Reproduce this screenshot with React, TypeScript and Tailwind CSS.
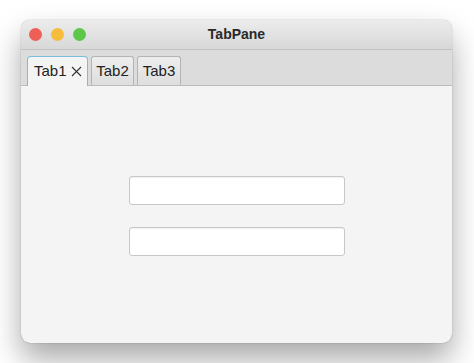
const App = () => {
  return (
    <div className="w-[474px] h-[363px] bg-white pt-[20px] pl-[21px] font-['Liberation_Sans',sans-serif]">
      <div className="w-[431px] h-[323px] rounded-[9px] overflow-hidden bg-[#f4f4f4] flex flex-col shadow-[0_16px_30px_rgba(0,0,0,0.34),0_0_1px_rgba(0,0,0,0.5)]">
        {/* title bar */}
        <div className="relative h-[30px] shrink-0 flex items-center bg-gradient-to-b from-[#ececec] to-[#d8d8d8] border-b border-[#c2c2c2]">
          <div className="flex gap-[9px] pl-[8px]">
            <div className="w-[13px] h-[13px] rounded-full bg-[#ee5f58]"></div>
            <div className="w-[13px] h-[13px] rounded-full bg-[#f6bd3d]"></div>
            <div className="w-[13px] h-[13px] rounded-full bg-[#5fc64c]"></div>
          </div>
          <div className="absolute inset-0 flex items-center justify-center text-[14px] font-bold text-[#2a2a2a]">
            TabPane
          </div>
        </div>

        {/* tab header */}
        <div className="h-[36px] shrink-0 bg-[#dcdcdc] border-b border-[#bcbcbc] flex items-end pl-[6px] gap-[3px]">
          <div className="w-[61px] h-[30px] -mb-px flex items-center pl-[6px] gap-[4px] bg-[#f4f4f4] border border-b-0 border-[#79bfdc] rounded-t-[4px] text-[15px] text-[#222]">
            <span>Tab1</span>
            <svg width="11" height="11" viewBox="0 0 11 11">
              <path d="M1 1L10 10M10 1L1 10" stroke="#333" strokeWidth="1.1" />
            </svg>
          </div>
          <div className="w-[43px] h-[29px] flex items-center justify-center bg-gradient-to-b from-[#eeeeee] to-[#dedede] border border-b-0 border-[#b4b4b4] rounded-t-[3px] text-[15px] text-[#222]">
            Tab2
          </div>
          <div className="w-[44px] h-[29px] flex items-center justify-center bg-gradient-to-b from-[#eeeeee] to-[#dedede] border border-b-0 border-[#b4b4b4] rounded-t-[3px] text-[15px] text-[#222]">
            Tab3
          </div>
        </div>

        {/* content */}
        <div className="flex-1 flex flex-col items-center pt-[90px] gap-[22px]">
          <div className="w-[216px] h-[29px] bg-white border border-[#c8c8c8] rounded-[3px] shadow-[inset_0_1px_1px_rgba(0,0,0,0.06)]"></div>
          <div className="w-[216px] h-[29px] bg-white border border-[#c8c8c8] rounded-[3px] shadow-[inset_0_1px_1px_rgba(0,0,0,0.06)]"></div>
        </div>
      </div>
    </div>
  );
};
export default App;
